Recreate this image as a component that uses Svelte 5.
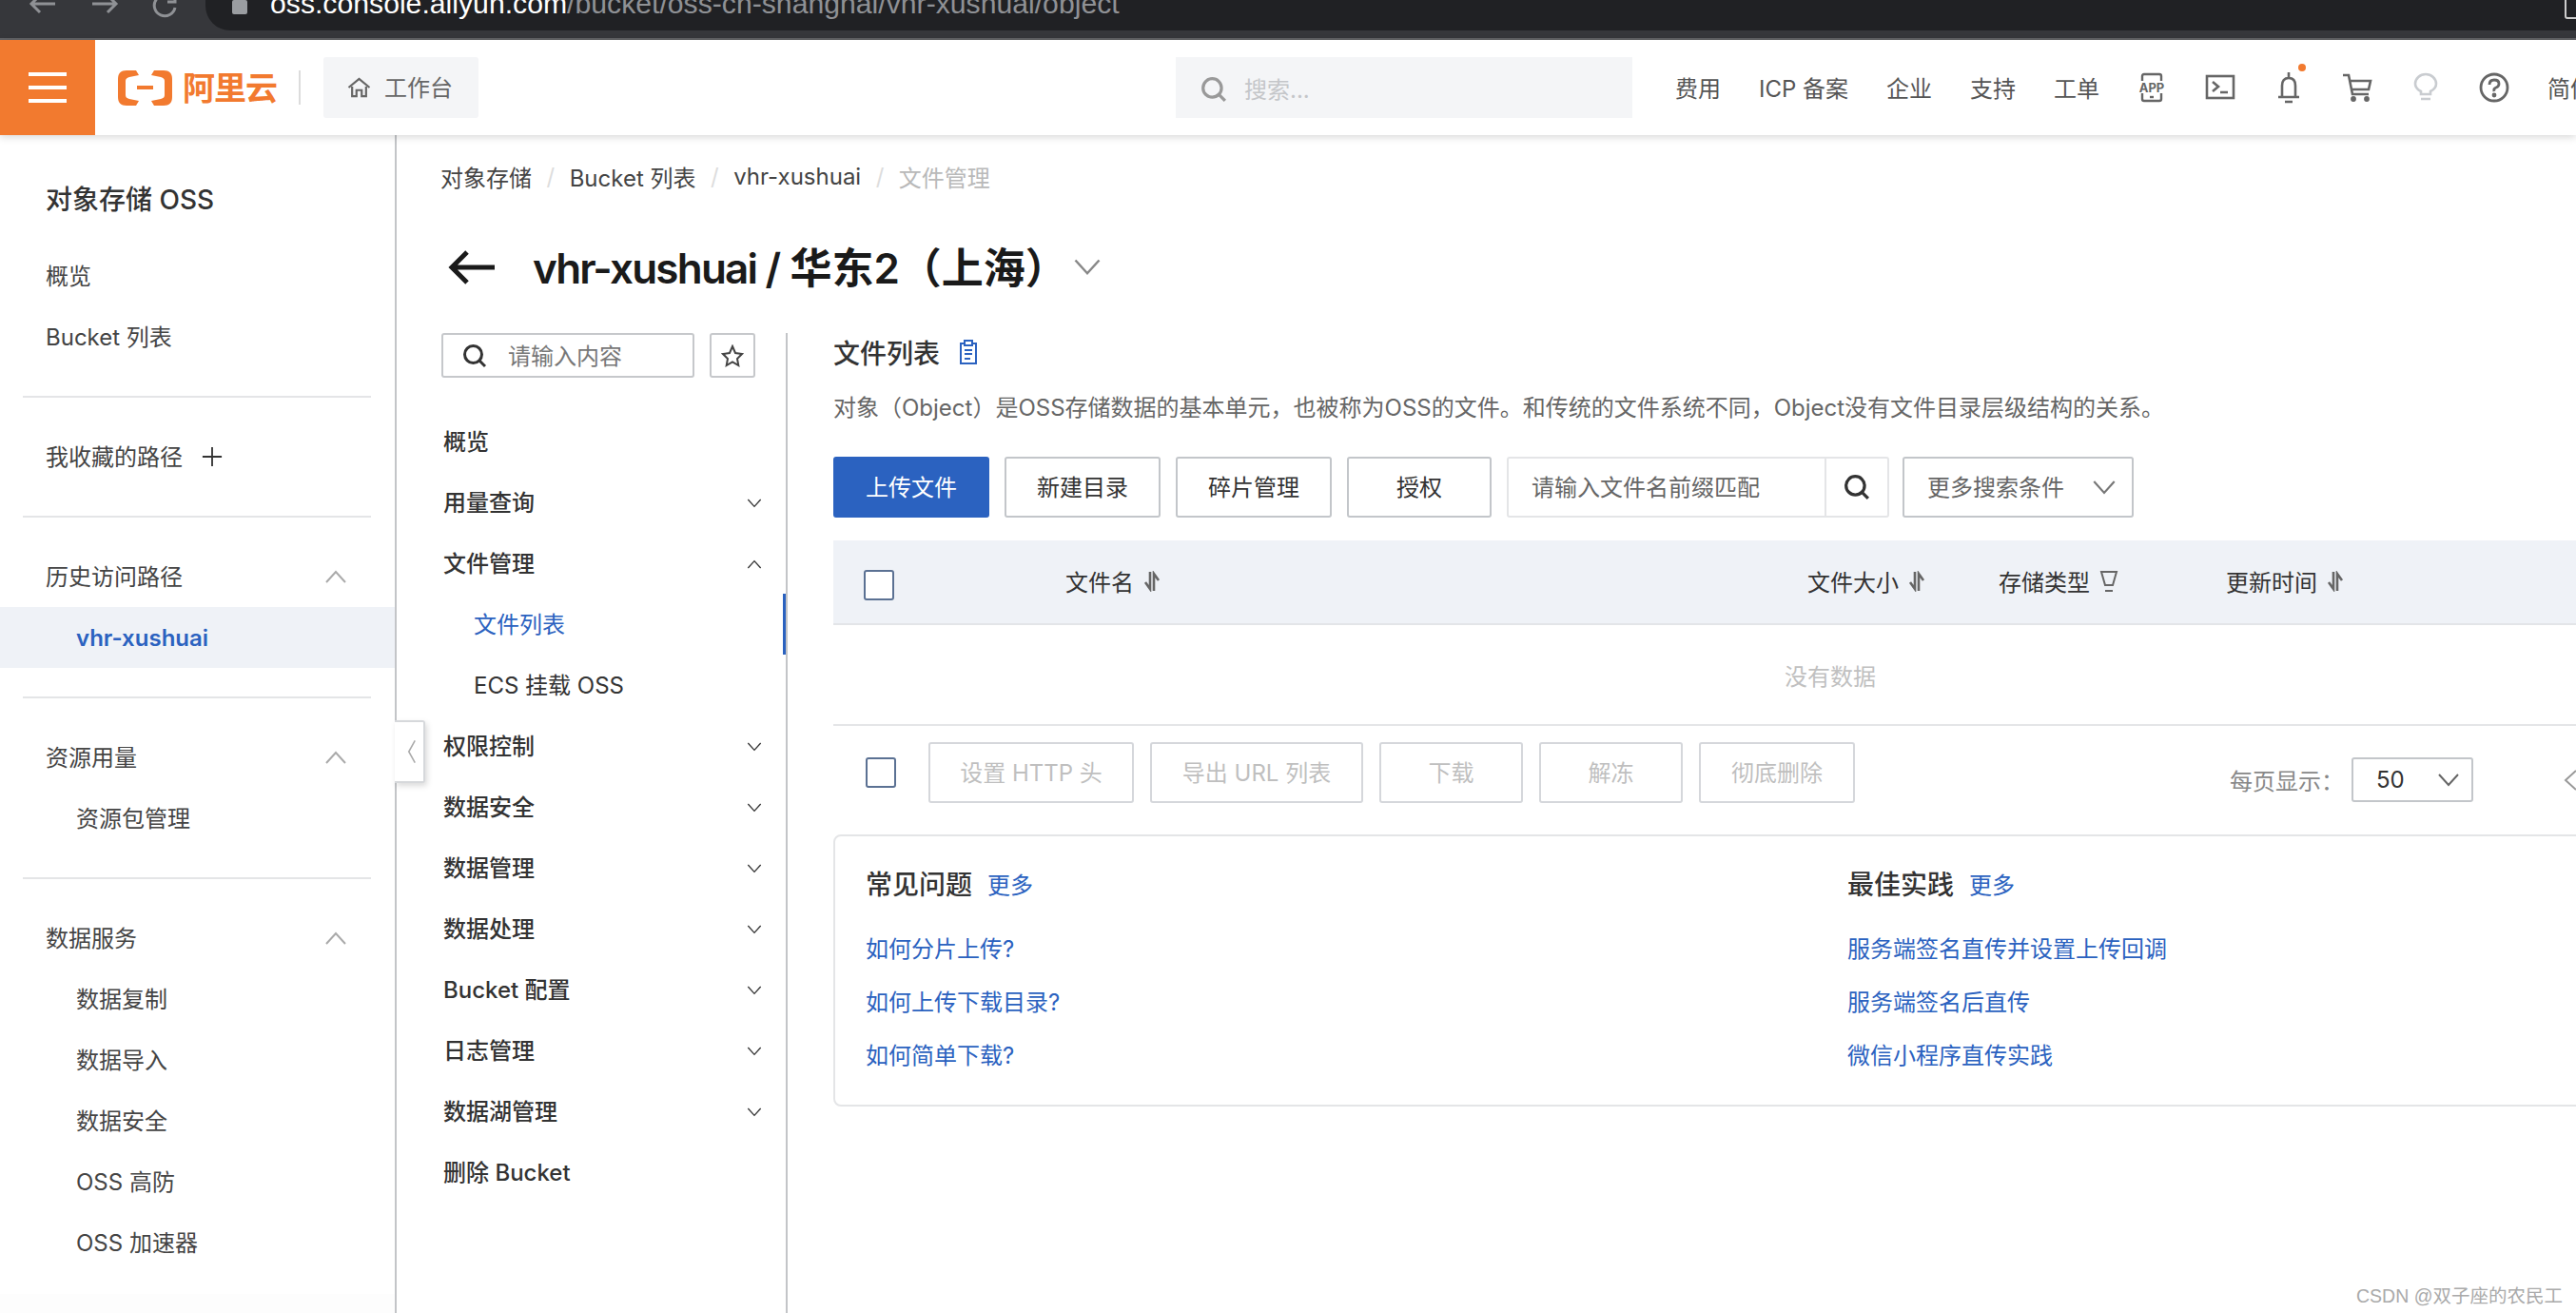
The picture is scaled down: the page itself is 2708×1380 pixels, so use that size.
<script>
  const navLinks = ['费用', 'ICP 备案', '企业', '支持', '工单'];
  const crumbs = ['对象存储', 'Bucket 列表', 'vhr-xushuai'];
  const menuBefore = [
    { label: '概览' },
    { label: '用量查询', arrow: 'down' },
    { label: '文件管理', arrow: 'up' }
  ];
  const menuAfter = ['权限控制', '数据安全', '数据管理', '数据处理', 'Bucket 配置', '日志管理', '数据湖管理'];
  const disabledActions = [
    { label: '设置 HTTP 头', cls: 'w-http' },
    { label: '导出 URL 列表', cls: 'w-url' },
    { label: '下载', cls: 'w-short' },
    { label: '解冻', cls: 'w-short' },
    { label: '彻底删除', cls: 'w-del' }
  ];
  const services = ['数据复制', '数据导入', '数据安全', 'OSS 高防', 'OSS 加速器'];
  const faq = ['如何分片上传?', '如何上传下载目录?', '如何简单下载?'];
  const practice = ['服务端签名直传并设置上传回调', '服务端签名后直传', '微信小程序直传实践'];
</script>

{#snippet chevron(dir, cls)}
  <svg class={cls} viewBox="0 0 24 14" fill="none" stroke="currentColor" stroke-width="2">
    {#if dir === 'up'}
      <path d="M2 13 12 2l10 11" />
    {:else}
      <path d="M2 1l10 11L22 1" />
    {/if}
  </svg>
{/snippet}

{#snippet sortIcon()}
  <svg class="sort" viewBox="0 0 18 22" fill="none" stroke="#666" stroke-width="2.6">
    <path d="M7 1v18L2 12" />
    <path d="M11 21V3l5 7" />
  </svg>
{/snippet}

{#snippet searchIcon(cls)}
  <svg class={cls} viewBox="0 0 26 26" fill="none" stroke="currentColor" stroke-width="3">
    <circle cx="11.5" cy="11.5" r="9" />
    <path d="M18 18l6 6" />
  </svg>
{/snippet}

<div class="page">
  <div class="browser">
    <div class="browser-btns">
      <svg viewBox="0 0 30 20" fill="none" stroke="#8f9195" stroke-width="3"><path d="M28 4H4M12-5 3 4l9 9" /></svg>
      <svg viewBox="0 0 30 20" fill="none" stroke="#8f9195" stroke-width="3"><path d="M2 4h24M18-5l9 9-9 9" /></svg>
      <svg viewBox="0 0 30 20" fill="none" stroke="#8f9195" stroke-width="3"><path d="M24 8a11 11 0 1 1-3-10M24-6v8h-8" /></svg>
    </div>
    <div class="urlbar">
      <span class="lock"></span>
      <span class="url"><b>oss.console.aliyun.com</b>/bucket/oss-ch-shanghai/vhr-xushuai/object</span>
      <span class="ext"></span>
    </div>
  </div>

  <header class="topbar">
    <div class="burger"><span></span><span></span><span></span></div>
    <div class="logo">
      <svg viewBox="0 0 57 37" class="logo-mark">
        <path fill="#f27a2f" d="M19 0H9C3 0 0 3 0 9v19c0 6 3 9 9 9h10l3-5-10-2c-3-1-4-2-4-4V11c0-2 1-3 4-4l10-2zM38 0h10c6 0 9 3 9 9v19c0 6-3 9-9 9H38l-3-5 10-2c3-1 4-2 4-4V11c0-2-1-3-4-4L35 5zM20 16h17v4H20z" />
      </svg>
      <span class="logo-text">阿里云</span>
    </div>
    <span class="logo-sep"></span>
    <div class="workbench">
      <svg viewBox="0 0 26 24" fill="none" stroke="#666" stroke-width="2.4"><path d="M1 12 13 2l12 10M5 11v11h5v-7h6v7h5V11" /></svg>
      工作台
    </div>
    <div class="global-search">
      {@render searchIcon('gs-icon')}
      <span>搜索...</span>
    </div>
    <nav class="links">
      {#each navLinks as link}
        <span>{link}</span>
      {/each}
    </nav>
    <div class="tools">
      <svg viewBox="0 0 32 32" fill="none" stroke="#666" stroke-width="2.4">
        <path d="M6 9V4q0-2 2-2h16q2 0 2 2v5M6 22v6q0 2 2 2h16q2 0 2-2v-6" />
        <text x="16" y="20.500" text-anchor="middle" class="app-text">APP</text>
        <path d="M14 26h4" />
      </svg>
      <svg viewBox="0 0 32 32" fill="none" stroke="#666" stroke-width="2.6">
        <rect x="2" y="4" width="28" height="23" />
        <path d="M8 10l6 5-6 5M16 21h8" />
      </svg>
      <div class="bell">
        <svg viewBox="0 0 32 32" fill="none" stroke="#666" stroke-width="2.600">
          <path d="M16 0v5M9 25V14q0-8 7-8t7 8v11M5 26h22M12 31h8" />
        </svg>
        <span class="dot"></span>
      </div>
      <svg viewBox="0 0 32 32" fill="none" stroke="#666" stroke-width="2.6">
        <path d="M1 3h6l4 20h17M8 9h22l-2 9H10" />
        <circle cx="12" cy="28" r="1.6" fill="#666" />
        <circle cx="26" cy="28" r="1.6" fill="#666" />
      </svg>
      <svg viewBox="0 0 32 32" fill="none" stroke="#c9ccd0" stroke-width="2.6">
        <path d="M11 23v-3C7 18 5 15 5 12a11 10 0 0 1 22 0c0 3-2 6-6 8v3zM11 28h10" />
      </svg>
      <svg viewBox="0 0 32 32" fill="none" stroke="#666" stroke-width="2.8">
        <circle cx="16" cy="16" r="14" />
        <path d="M11 13q0-5 5-5t5 4q0 3-3 4t-2 4" />
        <circle cx="16" cy="24" r="1" fill="#666" />
      </svg>
    </div>
    <span class="lang">简体</span>
  </header>

  <div class="layout">
    <aside class="sidebar">
      <h2 class="side-title">对象存储 OSS</h2>
      <div class="side-row">概览</div>
      <div class="side-row">Bucket 列表</div>
      <hr />
      <div class="side-row">我收藏的路径
        <svg class="plus" viewBox="0 0 24 24" stroke="#333" stroke-width="2"><path d="M12 1v22M1 12h22" /></svg>
      </div>
      <hr />
      <div class="side-row split">历史访问路径 {@render chevron('up', 'side-chev')}</div>
      <div class="side-row sub active">vhr-xushuai</div>
      <hr />
      <div class="side-row split">资源用量 {@render chevron('up', 'side-chev')}</div>
      <div class="side-row sub">资源包管理</div>
      <hr />
      <div class="side-row split">数据服务 {@render chevron('up', 'side-chev')}</div>
      {#each services as item}
        <div class="side-row sub">{item}</div>
      {/each}
      <button class="collapse" aria-label="收起">
        <svg viewBox="0 0 14 40" fill="none" stroke="#aaa" stroke-width="2.4"><path d="M12 2 2 20l10 18" /></svg>
      </button>
    </aside>

    <div class="content">
      <div class="breadcrumb">
        {#each crumbs as crumb}
          <span>{crumb}</span>
          <i>/</i>
        {/each}
        <span class="current">文件管理</span>
      </div>

      <div class="title-row">
        <svg class="back" viewBox="0 0 50 36" fill="none" stroke="#1a1a1a" stroke-width="5"><path d="M49 18H5M20 2 4 18l16 16" /></svg>
        <h1><span class="tight">vhr-xushuai /</span> 华东2（上海）</h1>
        {@render chevron('down', 'title-chev')}
      </div>

      <div class="body">
        <div class="menu">
          <div class="menu-search">
            <div class="menu-input">
              {@render searchIcon('mi-icon')}
              <span>请输入内容</span>
            </div>
            <div class="star">
              <svg viewBox="0 0 24 24" fill="none" stroke="#444" stroke-width="2"><path d="M12 2l3 7 7 1-5 5 1.300 7-6.300-3.500L5.700 22 7 15 2 10l7-1z" /></svg>
            </div>
          </div>
          {#each menuBefore as item}
            <div class="menu-row">
              {item.label}
              {#if item.arrow}{@render chevron(item.arrow, 'menu-chev')}{/if}
            </div>
          {/each}
          <div class="menu-row sub selected">文件列表</div>
          <div class="menu-row sub">ECS 挂载 OSS</div>
          {#each menuAfter as label}
            <div class="menu-row">{label} {@render chevron('down', 'menu-chev')}</div>
          {/each}
          <div class="menu-row">删除 Bucket</div>
        </div>

        <main class="main">
          <div class="heading">
            <h3>文件列表</h3>
            <svg viewBox="0 0 20 26" fill="none" stroke="#2b62c0" stroke-width="2">
              <rect x="2" y="4" width="16" height="21" />
              <rect x="6" y="1" width="8" height="5" fill="#fff" />
              <path d="M6 11h8M6 15h8M6 20h6" />
            </svg>
          </div>
          <p class="desc">对象（Object）是OSS存储数据的基本单元，也被称为OSS的文件。和传统的文件系统不同，Object没有文件目录层级结构的关系。</p>

          <div class="toolbar">
            <button class="btn primary w-upload">上传文件</button>
            <button class="btn w-mid">新建目录</button>
            <button class="btn w-mid">碎片管理</button>
            <button class="btn w-auth">授权</button>
            <div class="prefix">
              <span class="prefix-text">请输入文件名前缀匹配</span>
              <span class="prefix-btn">{@render searchIcon('prefix-icon')}</span>
            </div>
            <div class="more"><span class="more-text">更多搜索条件</span> {@render chevron('down', 'more-chev')}</div>
          </div>

          <div class="thead">
            <span class="check"></span>
            <span class="col col-name">文件名 {@render sortIcon()}</span>
            <span class="col col-size">文件大小 {@render sortIcon()}</span>
            <span class="col col-type">存储类型
              <svg class="filter" viewBox="0 0 20 24" fill="none" stroke="#666" stroke-width="2"><path d="M2 2h16l-4 14H6zM6 22h8" /></svg>
            </span>
            <span class="col col-time">更新时间 {@render sortIcon()}</span>
          </div>
          <div class="empty">没有数据</div>

          <div class="batch">
            <span class="check"></span>
            <div class="batch-btns">
              {#each disabledActions as action}
                <button class="btn disabled {action.cls}" disabled>{action.label}</button>
              {/each}
            </div>
            <div class="pager">
              <span class="per">每页显示：</span>
              <div class="select">50 {@render chevron('down', 'select-chev')}</div>
              {@render chevron('up', 'pager-chev')}
            </div>
          </div>

          <section class="help">
            <div class="help-col">
              <div class="help-head"><h4>常见问题</h4><a href="#more">更多</a></div>
              {#each faq as q}
                <a class="help-link" href="#q">{q}</a>
              {/each}
            </div>
            <div class="help-col">
              <div class="help-head"><h4>最佳实践</h4><a href="#more">更多</a></div>
              {#each practice as q}
                <a class="help-link" href="#q">{q}</a>
              {/each}
            </div>
          </section>
        </main>
      </div>
    </div>
  </div>

  <div class="watermark">CSDN @双子座的农民工</div>
</div>

<style>
  :global(body) {
    margin: 0;
    background: #fff;
  }

  .page {
    position: relative;
    width: 2708px;
    height: 1380px;
    overflow: hidden;
    display: flex;
    flex-direction: column;
    font-family: Inter, "Noto Sans CJK SC", sans-serif;
    font-size: 24px;
    color: #333;
  }

  /* browser chrome, cut off at the top */
  .browser {
    flex: none;
    height: 42px;
    box-sizing: border-box;
    background: #36373b;
    border-bottom: 2px solid #626366;
    display: flex;
    overflow: hidden;
  }

  .browser-btns {
    flex: none;
    display: flex;
    gap: 35px;
    padding-left: 30px;
    width: 216px;
    box-sizing: border-box;
  }

  .browser-btns svg {
    width: 30px;
    height: 20px;
  }

  .urlbar {
    flex: 1;
    height: 32px;
    background: #202124;
    border-bottom-left-radius: 26px;
    display: flex;
    align-items: flex-start;
    padding-left: 28px;
    position: relative;
  }

  .lock {
    width: 16px;
    height: 15px;
    background: #9a9da1;
    border-radius: 2px;
    margin-right: 24px;
  }

  .url {
    font-family: "Liberation Sans", sans-serif;
    font-size: 30.2px;
    line-height: 30px;
    margin-top: -11px;
    color: #8f9195;
    white-space: nowrap;
  }

  .url b {
    font-weight: 400;
    color: #fff;
  }

  .ext {
    position: absolute;
    right: -6px;
    top: -6px;
    width: 14px;
    height: 22px;
    border: 2px solid #ccc;
    border-radius: 3px;
  }

  /* top nav */
  .topbar {
    flex: none;
    height: 100px;
    background: #fff;
    display: flex;
    align-items: center;
    box-shadow: 0 2px 8px rgba(0, 0, 0, 0.16);
    position: relative;
    z-index: 2;
  }

  .burger {
    flex: none;
    width: 100px;
    height: 100px;
    background: #f27a2f;
    display: flex;
    flex-direction: column;
    justify-content: center;
    align-items: center;
    gap: 10px;
  }

  .burger span {
    width: 40px;
    height: 4px;
    background: #fff;
  }

  .logo {
    flex: none;
    display: flex;
    align-items: center;
    margin-left: 24px;
    gap: 11px;
  }

  .logo-mark {
    width: 57px;
    height: 37px;
  }

  .logo-text {
    font-size: 34px;
    font-weight: 700;
    letter-spacing: -1px;
    color: #f27a2f;
    line-height: 37px;
    white-space: nowrap;
  }

  .logo-sep {
    flex: none;
    width: 2px;
    height: 36px;
    background: #dcdcdc;
    margin-left: 23px;
  }

  .workbench {
    flex: none;
    margin-left: 24px;
    width: 163px;
    height: 64px;
    background: #f4f5f7;
    border-radius: 3px;
    display: flex;
    align-items: center;
    gap: 14px;
    padding: 0 0 3px 25px;
    box-sizing: border-box;
    color: #666;
  }

  .workbench svg {
    width: 25px;
    height: 22px;
    margin-top: 3px;
  }

  .global-search {
    flex: none;
    margin-left: 733px;
    width: 480px;
    height: 64px;
    background: #f4f5f7;
    display: flex;
    align-items: center;
    color: #c4c6c9;
    padding-left: 26px;
    box-sizing: border-box;
    gap: 18px;
  }

  :global(.gs-icon) {
    width: 28px;
    height: 28px;
    color: #999;
    margin-top: 3px;
  }

  .links {
    flex: none;
    display: flex;
    gap: 40px;
    margin-left: 45px;
    padding-bottom: 2px;
    color: #555;
    white-space: nowrap;
  }

  .tools {
    flex: none;
    display: flex;
    gap: 40px;
    margin-left: 39px;
    align-items: center;
  }

  .tools svg {
    width: 32px;
    height: 32px;
    display: block;
    overflow: visible;
  }

  .app-text {
    font-size: 13px;
    font-weight: 700;
    fill: #666;
    stroke: none;
    font-family: Inter, sans-serif;
  }

  .bell {
    position: relative;
  }

  .dot {
    position: absolute;
    top: -9px;
    right: -2px;
    width: 8px;
    height: 8px;
    background: #f27a2f;
    border-radius: 50%;
  }

  .lang {
    flex: none;
    margin-left: 40px;
    padding-bottom: 2px;
    color: #555;
    white-space: nowrap;
  }

  .layout {
    flex: 1;
    min-height: 0;
    display: flex;
  }

  /* left sidebar */
  .sidebar {
    flex: none;
    width: 417px;
    box-sizing: border-box;
    border-right: 2px solid #c3c5c8;
    position: relative;
    padding-top: 48px;
  }

  .sidebar::after {
    content: '';
    position: absolute;
    left: 0;
    right: 0;
    top: 1218px;
    height: 20px;
    background: #fdfdfd;
  }

  .side-title {
    margin: 0 0 28px 48px;
    font-size: 28px;
    line-height: 40px;
    font-weight: 500;
    color: #333;
  }

  .side-row {
    height: 64px;
    box-sizing: border-box;
    display: flex;
    align-items: center;
    padding: 0 0 4px 48px;
    color: #444;
  }

  .side-row.split {
    justify-content: space-between;
    padding-right: 50px;
  }

  .side-row.sub {
    padding-left: 80px;
  }

  .side-row.active {
    background: #eff2f7;
    color: #2b62c0;
    font-weight: 600;
    padding-bottom: 0;
  }

  hr {
    border: none;
    height: 2px;
    background: #e4e5e7;
    margin: 30px 25px 30px 24px;
  }

  .plus {
    width: 22px;
    height: 22px;
    margin: 4px 0 0 20px;
  }

  :global(.side-chev) {
    width: 24px;
    height: 14px;
    color: #aaa;
    margin-top: 4px;
  }

  .collapse {
    position: absolute;
    left: 415px;
    top: 615px;
    z-index: 1;
    width: 32px;
    height: 66px;
    padding: 0 0 0 10px;
    background: #fff;
    border: 2px solid #d6d8db;
    border-left: none;
    border-radius: 0 3px 3px 0;
    box-shadow: 2px 3px 6px rgba(0, 0, 0, 0.15);
    box-sizing: border-box;
    display: flex;
    align-items: center;
  }

  .collapse svg {
    width: 16px;
    height: 26px;
  }

  /* content column */
  .content {
    flex: 1;
    min-width: 0;
    display: flex;
    flex-direction: column;
  }

  .breadcrumb {
    margin: 23px 0 2px 46px;
    height: 40px;
    display: flex;
    align-items: center;
    color: #444;
  }

  .breadcrumb i {
    font-style: normal;
    color: #ddd;
    margin: 0 15.5px;
  }

  .breadcrumb .current {
    color: #b9b9b9;
  }

  .title-row {
    margin: 44px 0 0 54px;
    height: 60px;
    display: flex;
    align-items: center;
  }

  .back {
    width: 50px;
    height: 36px;
  }

  h1 {
    margin: 0 0 4px 39px;
    font-size: 44px;
    font-weight: 600;
    color: #1a1a1a;
    white-space: pre;
  }

  .tight {
    letter-spacing: -1.8px;
  }

  :global(.title-chev) {
    width: 30px;
    height: 18px;
    color: #888;
    margin-left: 6px;
  }

  .body {
    margin-top: 39px;
    flex: 1;
    min-height: 0;
    display: flex;
  }

  /* second level menu */
  .menu {
    flex: none;
    width: 411px;
    box-sizing: border-box;
    border-right: 2px solid #c3c5c8;
  }

  .menu-search {
    display: flex;
    gap: 16px;
    margin: 0 0 35px 47px;
  }

  .menu-input {
    width: 266px;
    height: 47px;
    box-sizing: border-box;
    border: 2px solid #c6c8cb;
    border-radius: 3px;
    display: flex;
    align-items: center;
    padding: 0 0 3px 20px;
    gap: 22px;
    color: #777;
  }

  :global(.mi-icon) {
    width: 26px;
    height: 26px;
    color: #333;
    flex: none;
    margin-top: 3px;
  }

  .star {
    width: 48px;
    height: 47px;
    box-sizing: border-box;
    border: 2px solid #c6c8cb;
    border-radius: 3px;
    display: flex;
    align-items: center;
    justify-content: center;
  }

  .star svg {
    width: 24px;
    height: 24px;
  }

  .menu-row {
    height: 64px;
    box-sizing: border-box;
    padding: 0 25px 4px 49px;
    display: flex;
    align-items: center;
    justify-content: space-between;
    font-weight: 500;
    color: #333;
    position: relative;
  }

  .menu-row.sub {
    padding-left: 81px;
    font-weight: 400;
  }

  .menu-row.selected {
    color: #2b62c0;
  }

  .menu-row.selected::after {
    content: '';
    position: absolute;
    right: 0;
    top: 0;
    bottom: 0;
    width: 3px;
    background: #2b62c0;
  }

  :global(.menu-chev) {
    width: 16px;
    height: 10px;
    color: #333;
    margin-top: 6px;
  }

  /* main panel */
  .main {
    flex: 1;
    min-width: 0;
    margin-left: 48px;
  }

  .heading {
    height: 44px;
    box-sizing: border-box;
    padding-bottom: 4px;
    display: flex;
    align-items: center;
    gap: 20px;
  }

  h3 {
    margin: 0;
    font-size: 28px;
    font-weight: 500;
    color: #333;
  }

  .heading svg {
    width: 20px;
    height: 26px;
  }

  .desc {
    margin: 15px 0 0;
    line-height: 40px;
    color: #666;
    white-space: nowrap;
  }

  .toolbar {
    margin-top: 31px;
    display: flex;
    gap: 16px;
    height: 64px;
  }

  .btn {
    height: 64px;
    box-sizing: border-box;
    background: #fff;
    border: 2px solid #c3c6ca;
    border-radius: 3px;
    font: inherit;
    color: #333;
    padding: 0 0 3px;
  }

  .btn.primary {
    background: #2b62c0;
    border-color: #2b62c0;
    color: #fff;
  }

  .w-upload {
    width: 164px;
  }

  .w-mid {
    width: 164px;
  }

  .w-auth {
    width: 152px;
  }

  .prefix {
    width: 402px;
    height: 64px;
    box-sizing: border-box;
    border: 2px solid #e4e5e7;
    border-radius: 3px;
    display: flex;
    align-items: center;
    color: #666;
  }

  .prefix-text {
    flex: 1;
    padding: 0 0 3px 24px;
  }

  .prefix-btn {
    width: 66px;
    height: 100%;
    border-left: 2px solid #e4e5e7;
    display: flex;
    align-items: center;
    justify-content: center;
    box-sizing: border-box;
  }

  :global(.prefix-icon) {
    width: 28px;
    height: 28px;
    color: #333;
  }

  .more {
    width: 243px;
    height: 64px;
    margin-left: -2px;
    box-sizing: border-box;
    border: 2px solid #c3c6ca;
    border-radius: 3px;
    display: flex;
    align-items: center;
    justify-content: space-between;
    padding: 0 16px 0 24px;
    color: #666;
  }

  .more-text {
    padding-bottom: 3px;
  }

  :global(.more-chev) {
    width: 26px;
    height: 15px;
    color: #777;
  }

  .thead {
    margin-top: 24px;
    height: 89px;
    box-sizing: border-box;
    background: #eff2f7;
    border-bottom: 2px solid #e3e5e8;
    display: flex;
    align-items: center;
    position: relative;
    color: #333;
  }

  .thead .check {
    margin: 6px 0 0 32px;
  }

  .check {
    display: block;
    flex: none;
    width: 32px;
    height: 32px;
    box-sizing: border-box;
    background: #fff;
    border: 2px solid #5b7193;
    border-radius: 3px;
  }

  .col {
    position: absolute;
    top: 0;
    height: 85px;
    display: flex;
    align-items: center;
    gap: 10px;
    white-space: nowrap;
  }

  .col-name {
    left: 244px;
  }

  .col-size {
    left: 1024px;
  }

  .col-type {
    left: 1225px;
  }

  .col-time {
    left: 1464px;
  }

  :global(.sort) {
    width: 18px;
    height: 22px;
  }

  .filter {
    width: 20px;
    height: 24px;
  }

  .empty {
    width: 2096px;
    height: 106px;
    box-sizing: border-box;
    border-bottom: 2px solid #e4e5e7;
    display: flex;
    align-items: center;
    justify-content: center;
    color: #c0c0c0;
  }

  .batch {
    height: 114px;
    padding: 17px 0 0 34px;
    box-sizing: border-box;
    display: flex;
    align-items: flex-start;
    position: relative;
  }

  .batch .check {
    margin-top: 16px;
  }

  .batch-btns {
    display: flex;
    gap: 17px;
    margin-left: 34px;
  }

  .btn.disabled {
    border-color: #d5d7db;
    color: #bfbfbf;
  }

  .w-http {
    width: 216px;
  }

  .w-url {
    width: 224px;
  }

  .w-short {
    width: 151px;
  }

  .w-del {
    width: 164px;
  }

  .pager {
    position: absolute;
    left: 1468px;
    top: 33px;
    display: flex;
    align-items: center;
    white-space: nowrap;
  }

  .per {
    color: #888;
    width: 128px;
  }

  .select {
    width: 128px;
    height: 47px;
    box-sizing: border-box;
    border: 2px solid #c3c6ca;
    border-radius: 3px;
    display: flex;
    align-items: center;
    justify-content: space-between;
    padding: 0 12px 0 24px;
    color: #333;
  }

  :global(.select-chev) {
    width: 24px;
    height: 14px;
    color: #666;
  }

  :global(.pager-chev) {
    width: 24px;
    height: 14px;
    color: #999;
    transform: rotate(-90deg);
    margin-left: 90px;
  }

  .help {
    width: 2100px;
    height: 286px;
    box-sizing: border-box;
    border: 2px solid #e4e5e7;
    border-radius: 8px;
    display: flex;
    padding: 29px 0 0 32px;
  }

  .help-col {
    width: 1032px;
    display: flex;
    flex-direction: column;
    align-items: flex-start;
  }

  .help-head {
    display: flex;
    align-items: center;
    gap: 16px;
    height: 40px;
    margin-bottom: 22px;
  }

  h4 {
    margin: 0;
    font-size: 28px;
    font-weight: 500;
    color: #333;
  }

  a {
    color: #2b62c0;
    text-decoration: none;
  }

  .help-link {
    height: 56px;
    line-height: 56px;
  }

  .watermark {
    position: absolute;
    right: 14px;
    bottom: 5px;
    font-size: 19.5px;
    color: #aaa;
    font-family: "Liberation Sans", "Noto Sans CJK SC", sans-serif;
  }
</style>
